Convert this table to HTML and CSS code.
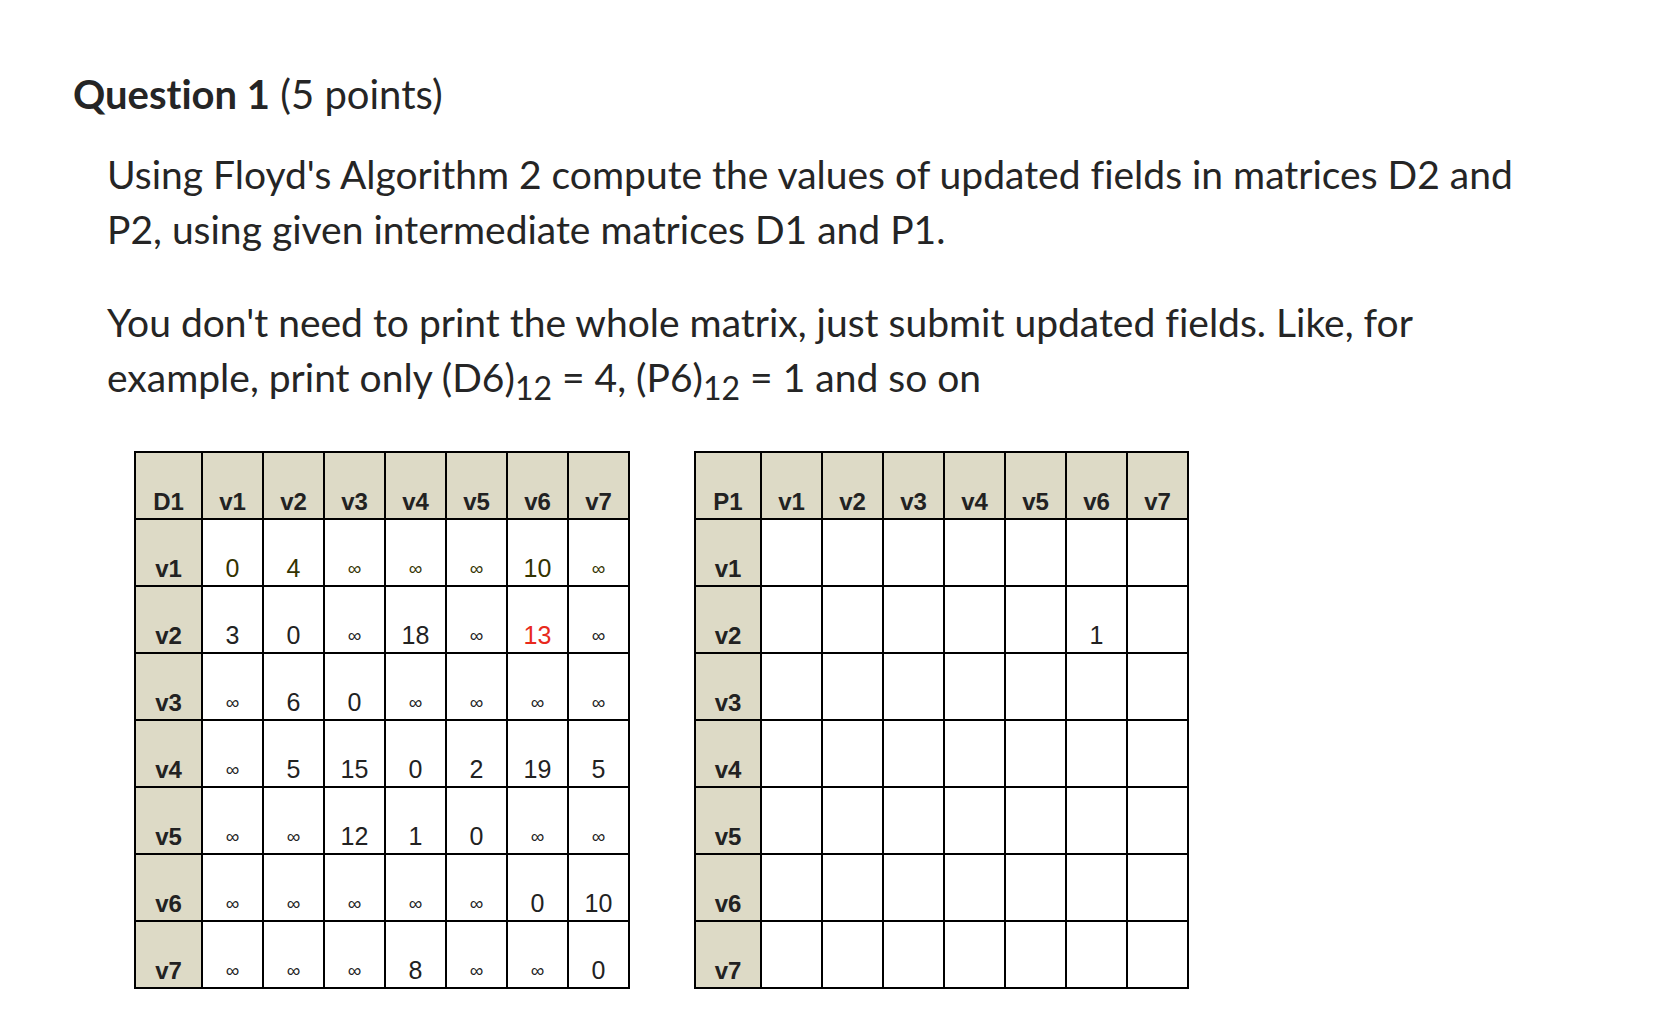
FILE: index.html
```html
<!DOCTYPE html>
<html lang="en">
<head>
<meta charset="utf-8">
<title>Question 1</title>
<link rel="stylesheet" href="styles.css">
</head>
<body>
<main class="question">
  <h2 class="q-title"><strong>Question 1</strong> (5 points)</h2>
  <div class="q-body">
    <p class="q-text">Using Floyd's Algorithm 2 compute the values of updated fields in matrices D2 and P2, using given intermediate matrices D1 and P1.</p>
    <p class="q-text last">You don't need to print the whole matrix, just submit updated fields. Like, for example, print only (D6)<sub>12</sub> = 4, (P6)<sub>12</sub> = 1 and so on</p>
    <div class="matrices">
      <table class="matrix">
        <colgroup><col class="c-head"><col><col><col><col><col><col><col></colgroup>
        <tr class="hrow"><th>D1</th><th>v1</th><th>v2</th><th>v3</th><th>v4</th><th>v5</th><th>v6</th><th>v7</th></tr>
        <tr class="olive"><th>v1</th><td>0</td><td>4</td><td class="inf">∞</td><td class="inf">∞</td><td class="inf">∞</td><td>10</td><td class="inf">∞</td></tr>
        <tr><th>v2</th><td>3</td><td>0</td><td class="inf">∞</td><td>18</td><td class="inf">∞</td><td class="red">13</td><td class="inf">∞</td></tr>
        <tr><th>v3</th><td class="inf">∞</td><td>6</td><td>0</td><td class="inf">∞</td><td class="inf">∞</td><td class="inf">∞</td><td class="inf">∞</td></tr>
        <tr><th>v4</th><td class="inf">∞</td><td>5</td><td>15</td><td>0</td><td>2</td><td>19</td><td>5</td></tr>
        <tr><th>v5</th><td class="inf">∞</td><td class="inf">∞</td><td>12</td><td>1</td><td>0</td><td class="inf">∞</td><td class="inf">∞</td></tr>
        <tr><th>v6</th><td class="inf">∞</td><td class="inf">∞</td><td class="inf">∞</td><td class="inf">∞</td><td class="inf">∞</td><td>0</td><td>10</td></tr>
        <tr><th>v7</th><td class="inf">∞</td><td class="inf">∞</td><td class="inf">∞</td><td>8</td><td class="inf">∞</td><td class="inf">∞</td><td>0</td></tr>
      </table>
      <table class="matrix p-matrix">
        <colgroup><col class="c-head"><col><col><col><col><col><col><col></colgroup>
        <tr class="hrow"><th>P1</th><th>v1</th><th>v2</th><th>v3</th><th>v4</th><th>v5</th><th>v6</th><th>v7</th></tr>
        <tr><th>v1</th><td></td><td></td><td></td><td></td><td></td><td></td><td></td></tr>
        <tr><th>v2</th><td></td><td></td><td></td><td></td><td></td><td>1</td><td></td></tr>
        <tr><th>v3</th><td></td><td></td><td></td><td></td><td></td><td></td><td></td></tr>
        <tr><th>v4</th><td></td><td></td><td></td><td></td><td></td><td></td><td></td></tr>
        <tr><th>v5</th><td></td><td></td><td></td><td></td><td></td><td></td><td></td></tr>
        <tr><th>v6</th><td></td><td></td><td></td><td></td><td></td><td></td><td></td></tr>
        <tr><th>v7</th><td></td><td></td><td></td><td></td><td></td><td></td><td></td></tr>
      </table>
    </div>
  </div>
</main>
</body>
</html>
```
FILE: styles.css
```css
html, body {
  margin: 0;
  padding: 0;
  background: #ffffff;
}
body {
  font-family: Lato, "Noto Sans", sans-serif;
  color: #252525;
  font-variant-ligatures: none;
}
.question {
  padding: 73px 0 0 73px;
}
.q-title {
  margin: 0;
  font-size: 40px;
  line-height: 43px;
  font-weight: normal;
}
.q-title strong {
  font-weight: bold;
}
.q-body {
  padding-left: 34px;
  margin-top: 31px;
}
.q-text {
  margin: 0 0 37.5px;
  font-size: 39px;
  line-height: 55px;
  max-width: 1430px;
}
.q-text.last {
  margin-bottom: 46.5px;
}
.q-text sub {
  font-size: 32px;
  line-height: 0;
  vertical-align: -8px;
}
.matrices {
  display: flex;
  gap: 64px;
  padding-left: 27px;
  align-items: flex-start;
}
.matrix {
  border-collapse: collapse;
  table-layout: fixed;
  width: 496px;
  font-family: "Liberation Sans", Arial, sans-serif;
  color: #222222;
}
.p-matrix {
  width: 494px;
}
.matrix col {
  width: 61px;
}
.matrix col.c-head {
  width: 67px;
}
.p-matrix col.c-head {
  width: 66px;
}
.matrix th,
.matrix td {
  border: 2px solid #000000;
  height: 67px;
  padding: 0 0 4px;
  box-sizing: border-box;
  text-align: center;
  vertical-align: bottom;
  line-height: 25px;
}
.matrix th {
  background: #dddac6;
  font-size: 24px;
  font-weight: bold;
  color: #222222;
}
.matrix td {
  background: #ffffff;
  font-size: 25px;
}
.matrix td.inf {
  font-size: 19px;
}
.olive td {
  color: #333300;
}
.matrix td.red {
  color: #e8291c;
}
```
